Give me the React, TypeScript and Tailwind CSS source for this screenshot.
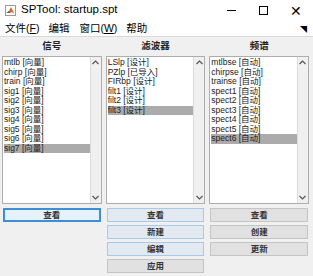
import React from 'react';

// SPTool 主窗口
const font = { fontFamily: '"Liberation Sans", "Noto Sans CJK SC", sans-serif' };

interface Column {
    title: string;
    items: string[];
    selected: number;
    buttons: { label: string; kind: 'focus' | 'blue' | 'gray' }[];
}

const columns: Column[] = [
    {
        title: '信号',
        items: ['mtlb [向量]', 'chirp [向量]', 'train [向量]', 'sig1 [向量]', 'sig2 [向量]', 'sig3 [向量]', 'sig4 [向量]', 'sig5 [向量]', 'sig6 [向量]', 'sig7 [向量]'],
        selected: 9,
        buttons: [{ label: '查看', kind: 'focus' }],
    },
    {
        title: '滤波器',
        items: ['LSlp [设计]', 'PZlp [已导入]', 'FIRbp [设计]', 'filt1 [设计]', 'filt2 [设计]', 'filt3 [设计]'],
        selected: 5,
        buttons: [
            { label: '查看', kind: 'blue' },
            { label: '新建', kind: 'blue' },
            { label: '编辑', kind: 'blue' },
            { label: '应用', kind: 'gray' },
        ],
    },
    {
        title: '频谱',
        items: ['mtlbse [自动]', 'chirpse [自动]', 'trainse [自动]', 'spect1 [自动]', 'spect2 [自动]', 'spect3 [自动]', 'spect4 [自动]', 'spect5 [自动]', 'spect6 [自动]'],
        selected: 8,
        buttons: [
            { label: '查看', kind: 'gray' },
            { label: '创建', kind: 'gray' },
            { label: '更新', kind: 'gray' },
        ],
    },
];

const buttonClass = {
    focus: 'bg-[#e5f1fb] border-2 border-[#3c8fd6]',
    blue: 'bg-[#e3e9f0] border border-[#a9c9e8]',
    gray: 'bg-[#e1e1e1] border border-[#c4c4c4]',
};

const MatlabIcon = () => (
    <svg width="11" height="11" viewBox="0 0 11 11">
        <rect x="0.5" y="0.5" width="10" height="10" fill="#fff" stroke="#9a9a9a" />
        <path d="M1.5 8 L4 6 L6 2 L9.5 9 L7 7 L5 8 Z" fill="#e2621b" />
        <path d="M1.5 8 L4 6 L5 8 Z" fill="#2a6fb5" />
    </svg>
);

const App = () => {
    return (
        <div className="w-[313px] h-[276px] bg-[#f0f0f0] flex flex-col overflow-hidden" style={font}>
            {/* 标题栏 */}
            <div className="h-[20px] bg-white flex items-center pl-[5px] shrink-0">
                <MatlabIcon />
                <span className="ml-[5px] text-[11.5px] text-black leading-none">SPTool: startup.spt</span>
                <div className="ml-auto flex items-center h-full pt-[1px]">
                    <span className="w-[32px] flex justify-center">
                        <span className="block w-[9px] h-px bg-black" />
                    </span>
                    <span className="w-[32px] flex justify-center">
                        <span className="block w-[9px] h-[9px] border border-black" />
                    </span>
                    <span className="w-[34px] flex justify-center text-[14px] leading-none font-light">✕</span>
                </div>
            </div>
            {/* 菜单栏 */}
            <div className="h-[17px] bg-white flex items-center pl-[5px] pt-[2px] text-[10.5px] text-black shrink-0 border-b border-[#d8d8d8]">
                <span>文件(<span className="underline">F</span>)</span>
                <span className="ml-[9px]">编辑</span>
                <span className="ml-[10px]">窗口(<span className="underline">W</span>)</span>
                <span className="ml-[9px]">帮助</span>
                <span className="ml-auto mr-[6px] text-[7px] leading-none">◥</span>
            </div>
            {/* 三列 */}
            <div className="grid grid-cols-3 gap-x-[4px] pl-[2px] pr-[4px] flex-1">
                {columns.map((col) => (
                    <div key={col.title} className="flex flex-col">
                        <div className="h-[19px] flex items-center justify-center text-[9.5px] font-bold text-[#222]">{col.title}</div>
                        <div className="h-[148px] bg-white border border-[#adadad] flex">
                            <div className="flex-1 pt-[1px] pl-[1px]">
                                {col.items.map((it, i) => (
                                    <div
                                        key={it}
                                        className={`h-[9.5px] text-[8.5px] leading-[9.5px] whitespace-nowrap text-[#222] ${i === col.selected ? 'bg-[#ababab]' : ''}`}
                                    >
                                        {it}
                                    </div>
                                ))}
                            </div>
                            <div className="w-[11px] bg-[#f0f0f0] border-l border-[#dcdcdc] flex flex-col justify-between items-center py-[3px]">
                                <svg width="7" height="5" viewBox="0 0 7 5">
                                    <path d="M0.5 4 L3.5 1 L6.5 4" fill="none" stroke="#555" strokeWidth="1.2" />
                                </svg>
                                <svg width="7" height="5" viewBox="0 0 7 5">
                                    <path d="M0.5 1 L3.5 4 L6.5 1" fill="none" stroke="#555" strokeWidth="1.2" />
                                </svg>
                            </div>
                        </div>
                        <div className="flex flex-col gap-[3px] mt-[4px] px-[1px]">
                            {col.buttons.map((b) => (
                                <div
                                    key={b.label}
                                    className={`h-[14px] flex items-center justify-center text-[8.5px] font-bold text-[#333] ${buttonClass[b.kind]}`}
                                >
                                    {b.label}
                                </div>
                            ))}
                        </div>
                    </div>
                ))}
            </div>
        </div>
    );
};

export default App;
